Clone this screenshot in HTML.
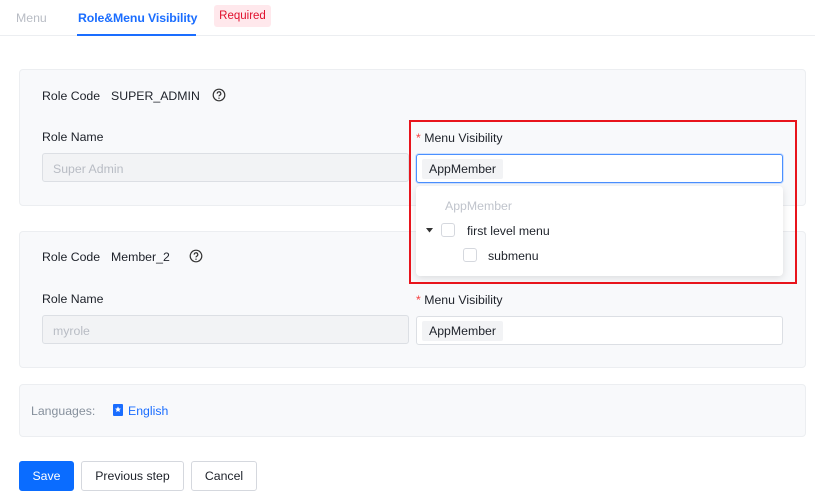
<!DOCTYPE html>
<html><head><meta charset="utf-8"><style>
*{box-sizing:border-box;margin:0;padding:0}
body{width:815px;height:495px;background:#fff;font-family:"Liberation Sans",sans-serif;font-size:12.3px;color:#1d2129;position:relative;overflow:hidden}
.a{position:absolute}
.card{position:absolute;left:19px;width:787px;background:#f8f9fb;border:1px solid #eceef1;border-radius:4px}
.lbl{position:absolute;white-space:nowrap;margin-top:1px}
.inp{position:absolute;height:29px;border:1px solid #dcdfe4;border-radius:3px;background:#f2f3f5;color:#b8bcc4;padding:8px 10px 0}
.sel{position:absolute;height:29px;border:1px solid #dcdfe4;border-radius:3px;background:#fff}
.tag{position:absolute;left:5px;top:4px;height:20px;line-height:21px;padding:0 7px;background:#f2f3f5;border-radius:2px;color:#1d2129}
.cb{position:absolute;width:14px;height:14px;border:1px solid #d5d8de;border-radius:3px;background:#fff}
.btn{position:absolute;top:461px;height:30px;border:1px solid #d5d8de;border-radius:3px;background:#fff;text-align:center;line-height:29px}
.star{color:#f53f3f}
svg{position:absolute}
</style></head><body>
<div class="a" style="left:0;top:35px;width:815px;height:1px;background:#eceef1"></div>
<div class="lbl" style="left:16px;top:10px;color:#b8bcc4">Menu</div>
<div class="lbl" style="left:78px;top:10px;color:#1a6dff;font-weight:bold;font-size:12.3px;letter-spacing:-0.1px">Role&amp;Menu Visibility</div>
<div class="a" style="left:77px;top:34px;width:119px;height:2px;background:#1a6dff"></div>
<div class="a" style="left:214px;top:5px;width:57px;height:22px;background:#ffe8ec;border-radius:3px"></div>
<div class="a" style="left:214px;top:10px;width:57px;color:#e0102d;font-size:11.5px;text-align:center">Required</div>

<div class="card" style="top:69px;height:137px"></div>
<div class="lbl" style="left:42px;top:88px">Role Code</div>
<div class="lbl" style="left:111px;top:88px">SUPER_ADMIN</div>
<svg style="left:212px;top:88px" width="14" height="14" viewBox="0 0 14 14"><circle cx="7" cy="7" r="5.8" fill="none" stroke="#333" stroke-width="1.2"/><path d="M5.2 5.6a1.8 1.8 0 1 1 2.6 1.6c-.6.3-.8.6-.8 1.2" fill="none" stroke="#333" stroke-width="1.2"/><circle cx="7" cy="10.2" r=".7" fill="#333"/></svg>
<div class="lbl" style="left:42px;top:129px">Role Name</div>
<div class="inp" style="left:42px;top:153px;width:367px">Super Admin</div>
<div class="lbl" style="left:416px;top:130px"><span class="star">*</span> Menu Visibility</div>
<div class="sel" style="left:416px;top:154px;width:367px;border-color:#4a90ff;box-shadow:0 0 0 1px #cfe1ff"><div class="tag">AppMember</div></div>

<div class="card" style="top:231px;height:137px"></div>
<div class="lbl" style="left:42px;top:249px">Role Code</div>
<div class="lbl" style="left:111px;top:249px">Member_2</div>
<svg style="left:189px;top:249px" width="14" height="14" viewBox="0 0 14 14"><circle cx="7" cy="7" r="5.8" fill="none" stroke="#333" stroke-width="1.2"/><path d="M5.2 5.6a1.8 1.8 0 1 1 2.6 1.6c-.6.3-.8.6-.8 1.2" fill="none" stroke="#333" stroke-width="1.2"/><circle cx="7" cy="10.2" r=".7" fill="#333"/></svg>
<div class="lbl" style="left:42px;top:291px">Role Name</div>
<div class="inp" style="left:42px;top:315px;width:367px">myrole</div>
<div class="lbl" style="left:416px;top:292px"><span class="star">*</span> Menu Visibility</div>
<div class="sel" style="left:416px;top:316px;width:367px"><div class="tag">AppMember</div></div>

<div class="a" style="left:416px;top:186px;width:367px;height:90px;background:#fff;border-radius:4px;box-shadow:0 2px 8px rgba(0,0,0,.12)">
 <div class="lbl" style="left:29px;top:12px;color:#c0c4cc">AppMember</div>
 <svg style="left:10px;top:42px" width="7" height="5"><path d="M0 0h7L3.5 4.5z" fill="#333"/></svg>
 <div class="cb" style="left:25px;top:37px"></div>
 <div class="lbl" style="left:51px;top:37px">first level menu</div>
 <div class="cb" style="left:47px;top:62px"></div>
 <div class="lbl" style="left:72px;top:62px">submenu</div>
</div>
<div class="a" style="left:409px;top:120px;width:388px;height:164px;border:2px solid #e8141c"></div>

<div class="card" style="top:384px;height:53px"></div>
<div class="lbl" style="left:31px;top:403px;color:#86909c">Languages:</div>
<svg style="left:113px;top:404px" width="10" height="12"><rect width="10" height="12" rx="1" fill="#1a6dff"/><path d="M5 2.5l.9 1.9 2 .2-1.5 1.4.4 2L5 7 3.2 8l.4-2L2.1 4.6l2-.2z" fill="#fff"/></svg>
<div class="lbl" style="left:128px;top:403px;color:#1a6dff">English</div>

<div class="btn" style="left:19px;width:55px;background:#0a6cff;border-color:#0a6cff;color:#fff">Save</div>
<div class="btn" style="left:81px;width:103px">Previous step</div>
<div class="btn" style="left:191px;width:66px">Cancel</div>
</body></html>
